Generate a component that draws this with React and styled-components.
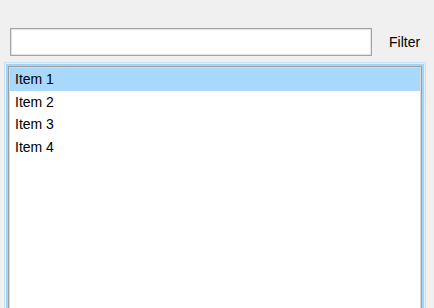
import React from 'react';
import styled, {createGlobalStyle} from "styled-components";

const GlobalStyle = createGlobalStyle`
body {
  margin: 0;
  background: #f0f0f0;
  font-family: "Liberation Sans", Arial, sans-serif;
  font-size: 14px;
  color: #000;
}
`

const Window = styled.div`
width: 434px;
height: 308px;
overflow: hidden;
`

const FilterBar = styled.div`
display: flex;
align-items: center;
padding: 28px 0 0 10px;
`

const FilterInput = styled.input`
box-sizing: border-box;
width: 362px;
height: 28px;
margin: 0;
border: 1px solid #a3a3a3;
box-shadow: inset 0 0 0 1px #e2e2e2;
background: #fff;
outline: none;
font: inherit;
padding: 0 4px;
`

const FilterLabel = styled.span`
margin-left: 17px;
`

const ListFrame = styled.div`
box-sizing: border-box;
margin: 10px 0 0 8px;
width: 414px;
height: 260px;
border: 1px solid #a0a0a0;
box-shadow: 0 0 0 2px #a3d3f7, 0 0 0 3px #e3f0fa, 0 0 0 4px #c6e2f7;
`

const ListBody = styled.div`
height: 100%;
box-sizing: border-box;
border: 1px solid #d9d9d9;
background: #fff;
`

const Row = styled.div`
height: 22.5px;
line-height: 22.5px;
padding-left: 5px;
background: ${p => p.selected ? "#a8d8fc" : "transparent"};
`

const items = ["Item 1", "Item 2", "Item 3", "Item 4"];

export default function App() {
    return (
        <Window>
            <GlobalStyle/>
            <FilterBar>
                <FilterInput type="text"/>
                <FilterLabel>Filter</FilterLabel>
            </FilterBar>
            <ListFrame>
                <ListBody>
                    {items.map((it, i) => (
                        <Row key={it} selected={i === 0}>{it}</Row>
                    ))}
                </ListBody>
            </ListFrame>
        </Window>
    );
}
